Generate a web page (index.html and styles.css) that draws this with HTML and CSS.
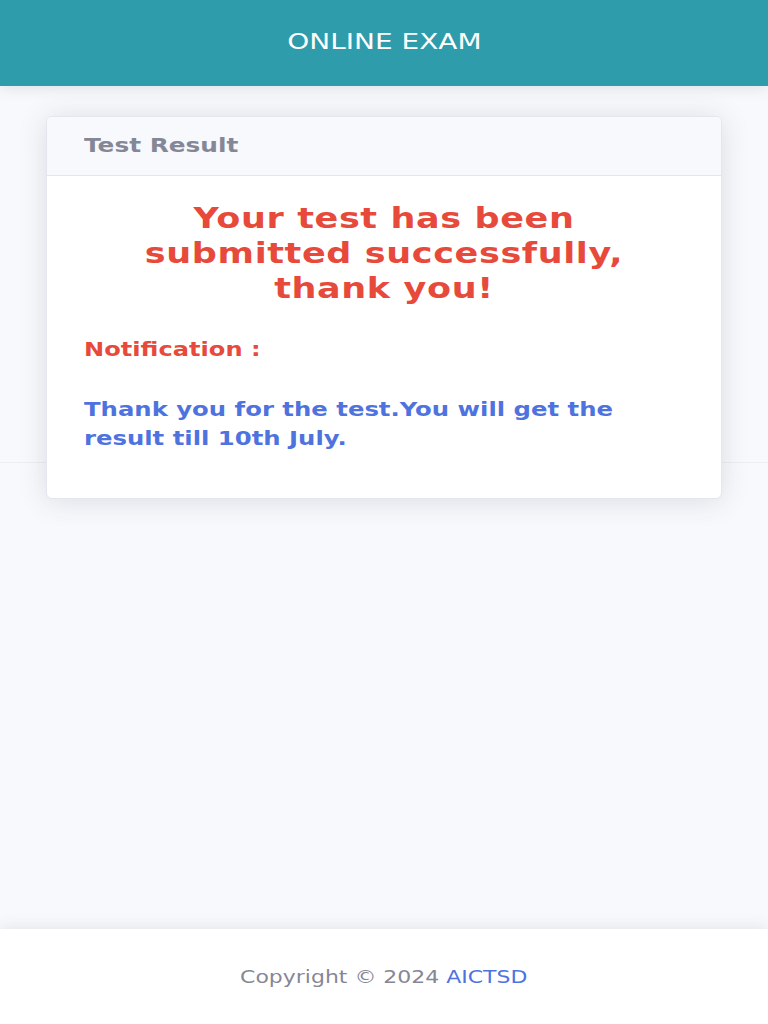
FILE: index.html
```html
<!DOCTYPE html>
<html>
<head>
<meta charset="utf-8">
<link rel="stylesheet" href="styles.css">
</head>
<body>
<div class="page">
  <header class="topbar"><span class="wide">ONLINE EXAM</span></header>
  <main class="content">
    <div class="backdrop"></div>
    <section class="card">
      <div class="card-header"><span class="wide left">Test Result</span></div>
      <div class="card-body">
        <h2 class="success">Your test has been<br>submitted successfully,<br>thank you!</h2>
        <p class="notify">Notification :</p>
        <p class="message">Thank you for the test.You will get the<br>result till 10th July.</p>
      </div>
    </section>
  </main>
  <footer class="footer"><span class="wide">Copyright © 2024 <span class="brand">AICTSD</span></span></footer>
</div>
</body>
</html>
```

FILE: styles.css
```css
html, body {
  margin: 0;
  padding: 0;
}
body {
  font-family: "DejaVu Sans", "Noto Sans", sans-serif;
  background: #f8f9fc;
}
.page {
  display: flex;
  flex-direction: column;
  height: 1024px;
}
.wide {
  display: inline-block;
  transform: scaleX(1.27);
  transform-origin: center center;
}
.wide.left {
  transform-origin: left center;
}
.topbar {
  height: 86px;
  box-sizing: border-box;
  padding-bottom: 3px;
  background: #2e9caa;
  color: #fff;
  font-size: 22px;
  font-weight: 400;
  display: flex;
  align-items: center;
  justify-content: center;
  box-shadow: 0 2px 14px rgba(58, 59, 69, 0.12);
  position: relative;
  z-index: 2;
}
.content {
  flex: 1;
  position: relative;
  padding: 30px 46px 0;
}
.backdrop {
  position: absolute;
  left: 0;
  right: 0;
  top: 0;
  height: 376px;
  border-bottom: 1px solid #eceef3;
}
.card {
  position: relative;
  background: #fff;
  border: 1px solid #e3e6f0;
  border-radius: 6px;
  box-shadow: 0 2px 28px rgba(58, 59, 69, 0.15);
  overflow: hidden;
}
.card-header {
  height: 59px;
  box-sizing: border-box;
  padding-bottom: 2px;
  background: #f8f9fc;
  border-bottom: 1px solid #e3e6f0;
  padding-left: 37px;
  display: flex;
  align-items: center;
  font-size: 20px;
  font-weight: 700;
  color: #858796;
}
.card-header .wide {
  transform: scaleX(1.24);
}
.card-body {
  padding: 25px 37px 45px;
}
.success {
  margin: 0;
  text-align: center;
  color: #e74a3b;
  font-size: 28px;
  line-height: 35px;
  font-weight: 700;
  letter-spacing: 0.5px;
  transform: scaleX(1.25);
}
.notify {
  margin: 29px 0 0;
  color: #e74a3b;
  font-size: 19px;
  line-height: 29px;
  font-weight: 700;
  transform: scaleX(1.27);
  transform-origin: left center;
}
.message {
  margin: 31px 0 0;
  color: #4e73df;
  font-size: 19px;
  line-height: 29px;
  font-weight: 700;
  transform: scaleX(1.28);
  transform-origin: left center;
}
.footer {
  height: 95px;
  background: #fff;
  display: flex;
  align-items: center;
  justify-content: center;
  color: #858796;
  font-size: 18px;
  box-shadow: 0 -2px 14px rgba(58, 59, 69, 0.1);
  position: relative;
}
.footer .wide {
  transform: scaleX(1.22);
}
.brand {
  color: #4e73df;
}
```
